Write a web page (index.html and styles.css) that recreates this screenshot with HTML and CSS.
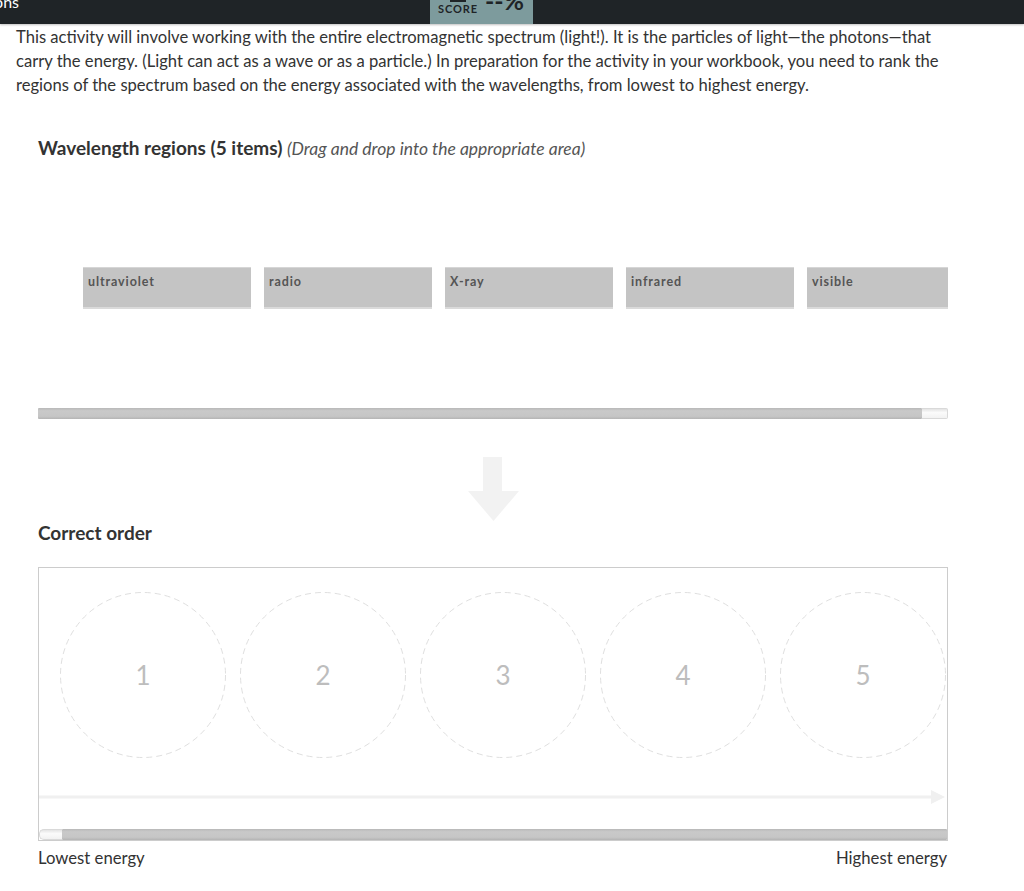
FILE: index.html
```html
<!DOCTYPE html>
<html lang="en">
<head>
  <meta charset="UTF-8">
  <meta name="viewport" content="width=device-width, initial-scale=1.0">
  <title>Electromagnetic Spectrum</title>
  <link rel="stylesheet" href="styles.css">
</head>
<body>
  <!-- Top bar (page is scrolled, so only the bottom of it shows) -->
  <header class="topbar">
    <div class="title-clip"><span class="title">Instructions</span></div>
    <div class="score">
      <div class="score-label">
        <svg class="score-icon" width="16" height="12" viewBox="0 0 16 12">
          <rect x="2" y="4" width="3" height="6" fill="#1f2427"/>
          <rect x="6.5" y="1" width="3" height="9" fill="#1f2427"/>
          <rect x="11" y="3" width="3" height="7" fill="#1f2427"/>
          <rect x="0" y="10" width="16" height="2" fill="#1f2427"/>
        </svg>
        <span>SCORE</span>
      </div>
      <div class="score-value">--%</div>
    </div>
  </header>

  <main class="page">
    <p class="intro">This activity will involve working with the entire electromagnetic spectrum (light!). It is the particles of light—the photons—that carry the energy. (Light can act as a wave or as a particle.) In preparation for the activity in your workbook, you need to rank the regions of the spectrum based on the energy associated with the wavelengths, from lowest to highest energy.</p>

    <section class="activity">
      <h2 class="section-title">Wavelength regions (5 items) <em>(Drag and drop into the appropriate area)</em></h2>

      <!-- Items to drag -->
      <div class="item-pool">
        <div class="item-row">
          <div class="item">ultraviolet</div>
          <div class="item">radio</div>
          <div class="item">X-ray</div>
          <div class="item">infrared</div>
          <div class="item">visible</div>
        </div>
      </div>
      <div class="scrollbar">
        <div class="scrollbar-thumb"></div>
        <div class="scrollbar-track track-end"></div>
      </div>

      <div class="drop-hint">
        <svg width="51" height="64" viewBox="0 0 51 64">
          <rect x="15" y="0" width="19" height="35" fill="#f2f2f2"/>
          <polygon points="0,34 51,34 25.5,64" fill="#f2f2f2"/>
        </svg>
      </div>

      <h2 class="section-title">Correct order</h2>

      <!-- Drop targets -->
      <div class="order-box">
        <div class="slots">
          <div class="slot"><svg class="slot-ring" viewBox="0 0 166 166"><circle cx="83" cy="83" r="82.5"/></svg><span>1</span></div>
          <div class="slot"><svg class="slot-ring" viewBox="0 0 166 166"><circle cx="83" cy="83" r="82.5"/></svg><span>2</span></div>
          <div class="slot"><svg class="slot-ring" viewBox="0 0 166 166"><circle cx="83" cy="83" r="82.5"/></svg><span>3</span></div>
          <div class="slot"><svg class="slot-ring" viewBox="0 0 166 166"><circle cx="83" cy="83" r="82.5"/></svg><span>4</span></div>
          <div class="slot"><svg class="slot-ring" viewBox="0 0 166 166"><circle cx="83" cy="83" r="82.5"/></svg><span>5</span></div>
        </div>
        <div class="energy-axis">
          <svg width="906" height="14" viewBox="0 0 906 14">
            <rect x="0" y="5.5" width="893" height="3" fill="#f0f0f0"/>
            <polygon points="892,0 906,7 892,14" fill="#f0f0f0"/>
          </svg>
        </div>
        <div class="scrollbar">
          <div class="scrollbar-track track-start"></div>
          <div class="scrollbar-thumb"></div>
        </div>
      </div>
      <div class="axis-labels">
        <span>Lowest energy</span>
        <span>Highest energy</span>
      </div>
    </section>
  </main>
</body>
</html>
```

FILE: styles.css
```css
/* General styles */
body {
  margin: 0;
  padding: 0;
  font-family: 'Lato', 'Open Sans', sans-serif;
  color: #333;
  background: #fff;
}

/* Top bar */
.topbar {
  display: flex;
  align-items: flex-start;
  height: 24px;
  background: #1f2427;
  box-shadow: 0 1px 2px rgba(0, 0, 0, 0.25);
  overflow: hidden;
}

.title-clip {
  width: 19px;
  display: flex;
  justify-content: flex-end;
  overflow: hidden;
}

.title {
  white-space: nowrap;
  color: #fff;
  font-size: 16px;
  line-height: 16px;
  margin-top: -6px;
}

.score {
  display: flex;
  align-items: flex-end;
  gap: 7px;
  height: 24px;
  width: 103px;
  margin-left: 411px;
  padding-left: 8px;
  box-sizing: border-box;
  background: #7d9b9d;
  overflow: hidden;
}

.score-label {
  display: flex;
  flex-direction: column;
  align-items: center;
  padding-bottom: 9px;
  font-size: 11px;
  line-height: 12px;
  font-weight: 700;
  letter-spacing: 0.9px;
  color: #1f2427;
}

.score-icon {
  display: block;
  margin-bottom: 1px;
}

.score-value {
  font-size: 25px;
  line-height: 24px;
  font-weight: 700;
  color: #1f2427;
  margin-bottom: 12px;
}

/* Page */
.intro {
  margin: 1px 0 0;
  padding-left: 16px;
  width: 950px;
  font-size: 16.6px;
  line-height: 24px;
  color: #333;
}

.activity {
  width: 910px;
  margin-left: 38px;
}

.section-title {
  margin: 40px 0 0;
  font-size: 19px;
  line-height: 22px;
  font-weight: 700;
  color: #333;
}

.section-title em {
  font-weight: 400;
  font-size: 17.5px;
  color: #555;
}

/* Item pool */
.item-pool {
  overflow: hidden;
  padding: 107px 0 99px 45px;
}

.item-row {
  display: flex;
  gap: 13px;
}

.item {
  flex: 0 0 168px;
  height: 42px;
  box-sizing: border-box;
  padding: 6px 5px;
  background: #c4c4c4;
  border-top: 1px solid #d6d6d6;
  border-bottom: 2px solid #dadada;
  font-size: 12.5px;
  line-height: 16px;
  font-weight: 700;
  letter-spacing: 0.9px;
  color: #555;
}

/* Fake scrollbars */
.scrollbar {
  display: flex;
  height: 11px;
}

.scrollbar-thumb {
  flex: 1;
  background: linear-gradient(#b8b8b8, #c9c9c9 25%, #c6c6c6 75%, #b4b4b4);
  border-radius: 1px;
}

.scrollbar-track {
  width: 26px;
  box-sizing: border-box;
  background: linear-gradient(#e4e4e4, #fbfbfb 40%, #f2f2f2);
  border: 1px solid #d9d9d9;
}

.track-end {
  border-left: none;
  border-radius: 0 2px 2px 0;
}

.track-start {
  width: 23px;
  border-right: none;
  border-radius: 5px 0 0 5px;
}

.drop-hint {
  display: flex;
  justify-content: center;
  margin-top: 38px;
  height: 64px;
}

.drop-hint + .section-title {
  margin-top: 1px;
}

/* Order box */
.order-box {
  margin-top: 23px;
  border: 1px solid #cccccc;
}

.slots {
  display: flex;
  gap: 14px;
  padding: 24px 0 0 21px;
}

.slot {
  position: relative;
  flex: 0 0 166px;
  height: 166px;
  display: flex;
  align-items: center;
  justify-content: center;
  font-size: 26px;
  color: #bdbdbd;
}

.slot-ring {
  position: absolute;
  top: 0;
  left: 0;
  width: 166px;
  height: 166px;
}

.slot-ring circle {
  fill: none;
  stroke: #dfdfdf;
  stroke-width: 1;
  stroke-dasharray: 6 4;
}

.slot span {
  position: relative;
}

.energy-axis {
  margin-top: 32px;
  height: 14px;
}

.energy-axis svg {
  display: block;
}

.order-box .scrollbar {
  margin-top: 25px;
}

.axis-labels {
  display: flex;
  justify-content: space-between;
  margin-top: 6px;
  padding-right: 1px;
  font-size: 16.7px;
  line-height: 22px;
  color: #333;
}
```
